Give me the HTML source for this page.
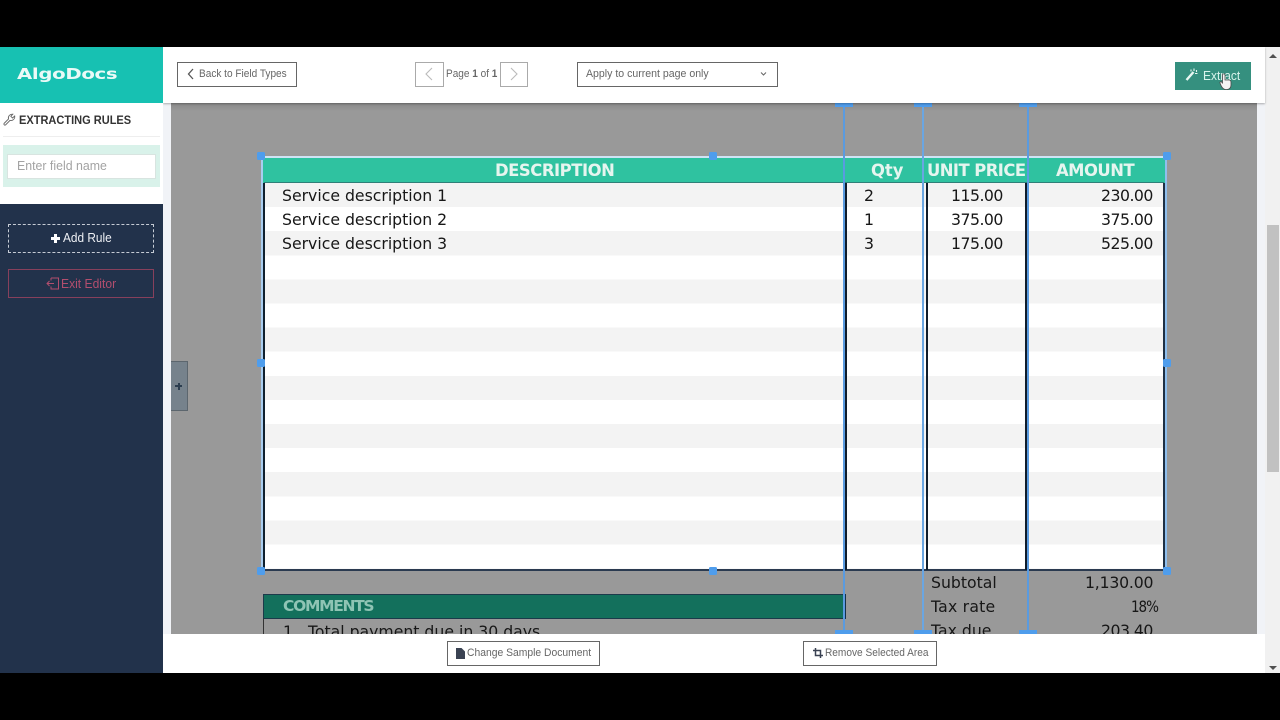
<!DOCTYPE html>
<html><head><meta charset="utf-8"><style>
html,body{margin:0;padding:0;width:1280px;height:720px;overflow:hidden;background:#000}
*{box-sizing:border-box}
.a{position:absolute}
.t{position:absolute;white-space:nowrap;line-height:1;transform-origin:left center}
.u{font-family:"Liberation Sans",sans-serif;color:#666}
.d{font-family:"DejaVu Sans",sans-serif;color:#171717;font-size:15.7px}
.n{letter-spacing:-.5px}
.h{font-family:"DejaVu Sans",sans-serif;color:#e6f5ef;font-size:16.4px;font-weight:bold}
.btn{position:absolute;background:#fff;border:1px solid #666}
.hd{position:absolute;background:#4f9dec}
.hc{border-radius:1.5px}
</style></head><body>
<div class="a" style="left:0;top:47px;width:1280px;height:626px;background:#fff;overflow:hidden">
</div>
<!-- scroll bar -->
<div class="a" style="left:1265px;top:47px;width:15px;height:626px;background:#f1f1f1"></div>
<div class="a" style="left:1267px;top:225px;width:12px;height:247px;background:#c1c1c1"></div>
<div class="a" style="left:1269px;top:54px;width:0;height:0;border-left:4px solid transparent;border-right:4px solid transparent;border-bottom:4px solid #505050"></div>
<div class="a" style="left:1269px;top:666px;width:0;height:0;border-left:4px solid transparent;border-right:4px solid transparent;border-top:4px solid #505050"></div>
<!-- gutter + gray page -->
<div class="a" style="left:163px;top:103px;width:1102px;height:531px;background:#f1f3f7"></div>
<div class="a" style="left:171px;top:103px;width:1086px;height:531px;background:#999"></div>
<div class="a" style="left:171px;top:103px;width:1086px;height:8px;background:linear-gradient(#8a8a8a,#999)"></div>
<!-- table -->
<div class="a" style="left:263px;top:158px;width:902px;height:25px;background:#2fc2a0"></div>
<div class="a" style="left:264px;top:182px;width:900px;height:2px;background:#2f7f78"></div>
<div class="a" style="left:263px;top:183px;width:902px;height:388px;background:repeating-linear-gradient(#f3f3f3 0,#f3f3f3 24.1px,#fff 24.1px,#fff 48.2px);border-left:2px solid #10202e;border-right:2px solid #1e3044;border-bottom:2px solid #2a3a50"></div>
<div class="a" style="left:1163px;top:183px;width:1px;height:387px;background:#1e3044"></div>
<div class="a" style="left:845px;top:183px;width:2px;height:387px;background:#0f1c2b"></div>
<div class="a" style="left:926px;top:183px;width:2px;height:387px;background:#0f1c2b"></div>
<div class="a" style="left:1025px;top:183px;width:2px;height:387px;background:#0f1c2b"></div>
<div class="t h" style="left:495px;top:163px;letter-spacing:-.45px">DESCRIPTION</div>
<div class="t h" style="left:871px;top:163px">Qty</div>
<div class="t h" style="left:927px;top:163px;letter-spacing:-.55px">UNIT PRICE</div>
<div class="t h" style="left:1056px;top:163px;letter-spacing:-.5px">AMOUNT</div>
<div class="t d" style="left:282px;top:188px">Service description 1</div>
<div class="t d" style="left:282px;top:212px">Service description 2</div>
<div class="t d" style="left:282px;top:236px">Service description 3</div>
<div class="t d" style="left:864px;top:188px">2</div>
<div class="t d" style="left:864px;top:212px">1</div>
<div class="t d" style="left:864px;top:236px">3</div>
<div class="t d n" style="left:951px;top:188px">115.00</div>
<div class="t d n" style="left:951px;top:212px">375.00</div>
<div class="t d n" style="left:951px;top:236px">175.00</div>
<div class="t d n" style="left:1101px;top:188px">230.00</div>
<div class="t d n" style="left:1101px;top:212px">375.00</div>
<div class="t d n" style="left:1101px;top:236px">525.00</div>
<!-- comments -->
<div class="a" style="left:263px;top:594px;width:583px;height:25px;background:#13705c;border:1px solid #1c3a4a;border-right:3px solid #15304a"></div>
<div class="t h" style="left:283px;top:599px;color:#8fc4b4;font-size:15.5px;letter-spacing:-1.3px">COMMENTS</div>
<div class="a" style="left:263px;top:619px;width:1px;height:15px;background:#333"></div>
<div class="t d" style="left:283px;top:624px">1.&nbsp; Total payment due in 30 days</div>
<div class="t d" style="left:931px;top:575px">Subtotal</div>
<div class="t d" style="left:931px;top:599px;letter-spacing:.2px">Tax rate</div>
<div class="t d" style="left:931px;top:623px">Tax due</div>
<div class="t d" style="left:1085px;top:575px;letter-spacing:-.2px">1,130.00</div>
<div class="t d" style="left:1131px;top:599px;letter-spacing:-1.2px;transform:scaleX(.86)">18%</div>
<div class="t d n" style="left:1101px;top:623px">203.40</div>
<!-- bottom clip for doc text -->
<div class="a" style="left:163px;top:634px;width:1102px;height:39px;background:#fff"></div>
<!-- selection overlay -->
<div class="a" style="left:261px;top:156px;width:906px;height:2px;background:#cfe3f5"></div>
<div class="a" style="left:261px;top:156px;width:2px;height:414px;background:#a9cdf0"></div>
<div class="a" style="left:1165px;top:156px;width:2px;height:414px;background:#8fbfee"></div>
<div class="a" style="left:843px;top:104px;width:2px;height:530px;background:#5a9be0"></div>
<div class="a" style="left:922px;top:104px;width:2px;height:530px;background:#6aa6e2"></div>
<div class="a" style="left:1027px;top:104px;width:2px;height:530px;background:#5a9be0"></div>
<div class="hd" style="left:835px;top:103px;width:18px;height:4px"></div>
<div class="hd" style="left:914px;top:103px;width:18px;height:4px"></div>
<div class="hd" style="left:1019px;top:103px;width:18px;height:4px"></div>
<div class="hd" style="left:835px;top:630px;width:18px;height:4px"></div>
<div class="hd" style="left:914px;top:630px;width:18px;height:4px"></div>
<div class="hd" style="left:1019px;top:630px;width:18px;height:4px"></div>
<div class="hd hc" style="left:257px;top:152px;width:8px;height:8px"></div>
<div class="hd hc" style="left:709px;top:152px;width:8px;height:8px"></div>
<div class="hd hc" style="left:1163px;top:152px;width:8px;height:8px"></div>
<div class="hd hc" style="left:257px;top:359px;width:8px;height:8px"></div>
<div class="hd hc" style="left:1163px;top:359px;width:8px;height:8px"></div>
<div class="hd hc" style="left:257px;top:567px;width:8px;height:8px"></div>
<div class="hd hc" style="left:709px;top:567px;width:8px;height:8px"></div>
<div class="hd hc" style="left:1163px;top:567px;width:8px;height:8px"></div>
<!-- toggle tab -->
<div class="a" style="left:171px;top:361px;width:17px;height:50px;background:#76828c;border:1px solid #5c666e;border-left:0"></div>
<div class="a" style="left:175px;top:385px;width:7px;height:2px;background:#2c3e50"></div>
<div class="a" style="left:177.5px;top:382.5px;width:2px;height:7px;background:#2c3e50"></div>
<!-- top bar -->
<div class="a" style="left:163px;top:47px;width:1102px;height:56px;background:#fff;box-shadow:0 1px 2px rgba(0,0,0,.3)"></div>
<div class="btn" style="left:177px;top:62px;width:120px;height:25px"></div>
<svg class="a" style="left:186px;top:68px" width="10" height="12" viewBox="0 0 10 12"><path d="M7 1 L2.500 6 L7 11" fill="none" stroke="#555" stroke-width="1.300"/></svg>
<div class="t u" style="left:199px;top:69px;font-size:11.2px;transform:scaleX(.9)">Back to Field Types</div>
<div class="btn" style="left:415px;top:62px;width:29px;height:25px;border-color:#aaa"></div>
<svg class="a" style="left:424px;top:67px" width="10" height="14" viewBox="0 0 10 14"><path d="M8 1 L2 7 L8 13" fill="none" stroke="#bbb" stroke-width="1.100"/></svg>
<div class="t u" style="left:446px;top:69px;font-size:10.8px;transform:scaleX(.93)">Page <b>1</b> of <b>1</b></div>
<div class="btn" style="left:500px;top:62px;width:28px;height:25px;border-color:#aaa"></div>
<svg class="a" style="left:509px;top:67px" width="10" height="14" viewBox="0 0 10 14"><path d="M2 1 L8 7 L2 13" fill="none" stroke="#bbb" stroke-width="1.100"/></svg>
<div class="btn" style="left:577px;top:62px;width:201px;height:25px"></div>
<div class="t u" style="left:586px;top:69px;font-size:11px;transform:scaleX(.96)">Apply to current page only</div>
<svg class="a" style="left:760px;top:71px" width="7" height="6" viewBox="0 0 7 6"><path d="M1 1.500 L3.500 4 L6 1.500" fill="none" stroke="#666" stroke-width="1"/></svg>
<div class="a" style="left:1175px;top:62px;width:76px;height:28px;background:#35907f"></div>
<svg class="a" style="left:1185px;top:68px" width="13" height="13" viewBox="0 0 13 13"><path d="M1.500 12 L8.500 4" stroke="#e8f7f2" stroke-width="2.400" fill="none"/><path d="M9 .5v2.500M11.500 2v2M10 5.500h2.500M6 1.500v2" stroke="#e8f7f2" stroke-width="1.100" fill="none"/></svg>
<div class="t" style="left:1203px;top:70px;font-family:'Liberation Sans',sans-serif;font-size:12.6px;color:#d8f4ec;transform:scaleX(.95)">Extract</div>
<svg class="a" style="left:1219px;top:73px" width="13" height="18" viewBox="0 0 13 18"><path d="M3.500 2 C3.500 .5 6 .5 6 2 V7 H10 C11.500 7 12 8 12 9.500 V12 C12 14.500 10.500 16.500 8 16.500 H6.500 C4.500 16.500 3.500 15 2.500 13.500 L1 10 C.5 8.800 2.300 8.200 3 9.500 L3.500 10.500Z" fill="#f4f4f4" stroke="#4a4a4a" stroke-width=".8"/></svg>
<!-- sidebar -->
<div class="a" style="left:0;top:47px;width:163px;height:56px;background:#17c1b2"></div>
<div class="t" style="left:17px;top:67px;font-family:'DejaVu Sans',sans-serif;font-weight:bold;font-size:15.500px;color:#eafaf7;letter-spacing:-.25px;transform:scaleX(1.27)">AlgoDocs</div>
<div class="a" style="left:0;top:103px;width:163px;height:101px;background:#fff"></div>
<svg class="a" style="left:3px;top:113px" width="13" height="13" viewBox="0 0 13 13"><path d="M1 10.500 L5.500 6 C4.800 3.500 6.800 .8 9.800 1.200 L7.800 3.300 L9.500 5 L11.700 3 C12.200 6 9.500 8 7 7.400 L2.500 12 C1.500 12.500 .6 11.500 1 10.500Z" fill="none" stroke="#666" stroke-width=".9"/></svg>
<div class="t" style="left:19px;top:114px;font-family:'Liberation Sans',sans-serif;font-weight:bold;font-size:12.200px;color:#333;transform:scaleX(.905)">EXTRACTING RULES</div>
<div class="a" style="left:3px;top:136px;width:157px;height:1px;background:#eee"></div>
<div class="a" style="left:3px;top:145px;width:157px;height:42px;background:#d9f2ea"></div>
<div class="a" style="left:7px;top:154px;width:149px;height:25px;background:#fff;border:1px solid #d8e4e0"></div>
<div class="t" style="left:17px;top:160px;font-family:'Liberation Sans',sans-serif;font-size:12.600px;color:#a3a3a3;transform:scaleX(.98)">Enter field name</div>
<div class="a" style="left:0;top:204px;width:163px;height:469px;background:#22324b"></div>
<div class="a" style="left:8px;top:224px;width:146px;height:29px;border:1px dashed #c6ccd5"></div>
<div class="a" style="left:51px;top:237px;width:9px;height:3px;background:#fff"></div>
<div class="a" style="left:54px;top:234px;width:3px;height:9px;background:#fff"></div>
<div class="t" style="left:63px;top:232px;font-family:'Liberation Sans',sans-serif;font-size:12.600px;color:#eef0f4;transform:scaleX(.94)">Add Rule</div>
<div class="a" style="left:8px;top:269px;width:146px;height:29px;border:1px solid #87405c"></div>
<svg class="a" style="left:46px;top:277px" width="14" height="13" viewBox="0 0 14 13"><path d="M5 1 H12.500 V12 H5 V9.500 M5 3.500 V1 M1 6.500 H8 M3.500 4 L1 6.500 L3.500 9" fill="none" stroke="#b24e6e" stroke-width="1"/></svg>
<div class="t" style="left:61px;top:278px;font-family:'Liberation Sans',sans-serif;font-size:12.600px;color:#b24e6e;transform:scaleX(.96)">Exit Editor</div>
<!-- bottom bar buttons -->
<div class="btn" style="left:447px;top:641px;width:153px;height:25px"></div>
<svg class="a" style="left:456px;top:648px" width="9" height="11" viewBox="0 0 9 11"><path d="M0 0 H5.500 L9 3.500 V11 H0Z" fill="#3a4252"/></svg>
<div class="t u" style="left:467px;top:648px;font-size:11px;transform:scaleX(.94)">Change Sample Document</div>
<div class="btn" style="left:803px;top:641px;width:134px;height:25px"></div>
<svg class="a" style="left:813px;top:648px" width="10" height="10" viewBox="0 0 10 10"><path d="M2.500 0 V7.500 H10 M0 2.500 H7.500 V10" fill="none" stroke="#3a4252" stroke-width="1.500"/></svg>
<div class="t u" style="left:825px;top:648px;font-size:11px;transform:scaleX(.92)">Remove Selected Area</div>
</body></html>
